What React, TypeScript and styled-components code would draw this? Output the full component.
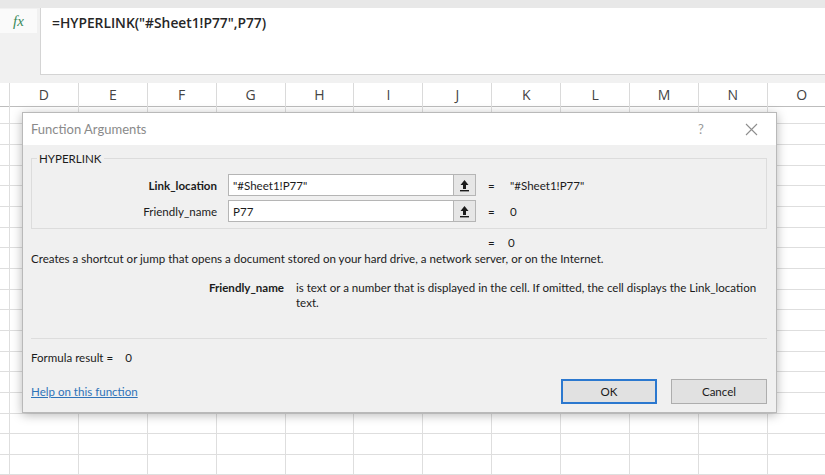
import React from 'react';
import styled, {createGlobalStyle} from 'styled-components';

const GlobalStyle = createGlobalStyle`
  html, body {
    margin: 0;
    padding: 0;
    background: #ffffff;
    overflow: hidden;
  }
  body {
    font-family: Lato, "Noto Sans", sans-serif;
  }
`;

const COLUMNS = ['', 'D', 'E', 'F', 'G', 'H', 'I', 'J', 'K', 'L', 'M', 'N', 'O'];
const ROW_COUNT = 18;

const Page = styled.div`
  position: relative;
  width: 825px;
  height: 475px;
  overflow: hidden;
  background: #ffffff;
`;

const Ribbon = styled.div`
  height: 8px;
  background: #e8e8e8;
`;

const FormulaBar = styled.div`
  display: flex;
  height: 67px;
  background: #f1f1f1;
`;

const FxBox = styled.div`
  width: 37px;
  height: 24px;
  margin-top: 1px;
  display: flex;
  align-items: center;
  justify-content: center;
  background: #fafafa;
  font-family: "Liberation Serif", serif;
  font-style: italic;
  font-size: 15px;
  color: #3a8a5a;
`;

const FormulaInput = styled.div`
  flex: 1;
  margin-left: 3px;
  background: #ffffff;
  border-left: 1px solid #d4d4d4;
  border-bottom: 1px solid #d4d4d4;
  padding: 5px 0 0 11px;
  font-family: "Open Sans", sans-serif;
  font-weight: 600;
  font-size: 13.8px;
  color: #262626;
`;

const Gap = styled.div`
  height: 8px;
  background: #f1f1f1;
`;

const Sheet = styled.div`
  display: grid;
  grid-template-columns: 10px repeat(12, 68.9px);
  grid-auto-rows: 20.67px;
`;

const HeaderCell = styled.div`
  height: 24px;
  display: flex;
  align-items: center;
  justify-content: center;
  background: #ffffff;
  border-right: 1px solid #dadada;
  border-bottom: 1px solid #bdbdbd;
  box-sizing: border-box;
  font-family: "Open Sans", sans-serif;
  font-size: 14px;
  color: #444444;
`;

const Cell = styled.div`
  border-right: 1px solid #dedede;
  border-bottom: 1px solid #dedede;
  box-sizing: border-box;
`;

const Dialog = styled.div`
  position: absolute;
  left: 22px;
  top: 112px;
  width: 755px;
  height: 301px;
  box-sizing: border-box;
  background: #f0f0f0;
  border: 1px solid #b9b9b9;
  box-shadow: 0 2px 10px rgba(0, 0, 0, 0.28);
  display: flex;
  flex-direction: column;
  font-size: 11.55px;
  color: #1b1b1b;
`;

const TitleBar = styled.div`
  height: 32px;
  background: #ffffff;
  display: flex;
  align-items: center;
  padding-left: 8px;
`;

const Title = styled.div`
  flex: 1;
  font-size: 13px;
  color: #8a8a8a;
`;

const TitleButton = styled.div`
  width: 50px;
  display: flex;
  justify-content: center;
  color: #9a9a9a;
  font-size: 13px;
`;

const Body = styled.div`
  flex: 1;
  display: flex;
  flex-direction: column;
  padding: 7px 9px 0 8px;
`;

const Group = styled.fieldset`
  margin: 0;
  padding: 9px 0 5px 0;
  border: 1px solid #dcdcdc;
  height: 77px;
  box-sizing: border-box;
`;

const Legend = styled.legend`
  padding: 0 2px;
  margin-left: 5px;
  font-size: 11.55px;
  color: #1b1b1b;
`;

const ArgRow = styled.div`
  display: grid;
  grid-template-columns: 196px 248px 34px 1fr;
  align-items: center;
  height: 22px;
  margin-bottom: 4px;
`;

const ArgLabel = styled.div<{ $bold?: boolean }>`
  text-align: right;
  padding-right: 11px;
  font-weight: ${p => (p.$bold ? 700 : 400)};
`;

const InputBox = styled.div`
  display: flex;
  height: 22px;
  box-sizing: border-box;
  border: 1px solid #b5b5b5;
  background: #ffffff;
`;

const InputText = styled.div`
  flex: 1;
  display: flex;
  align-items: center;
  padding-left: 4px;
`;

const PickButton = styled.div`
  width: 21px;
  display: flex;
  align-items: center;
  justify-content: center;
  background: #e6e6e6;
  border-left: 1px solid #b5b5b5;
`;

const Equals = styled.div`
  padding-left: 12px;
`;

const ResultLine = styled.div`
  display: grid;
  grid-template-columns: 457px 20px 1fr;
  height: 17px;
  margin-top: 5px;
  align-items: center;
`;

const Description = styled.div`
  margin-top: 1px;
  height: 17px;
`;

const ArgHelp = styled.div`
  display: grid;
  grid-template-columns: 265px 1fr;
  margin-top: 11px;
  line-height: 15px;
  height: 58px;
`;

const ArgHelpName = styled.div`
  text-align: right;
  font-weight: 700;
  padding-right: 12px;
`;

const ArgHelpText = styled.div`
  padding-right: 0;
`;

const Separator = styled.div`
  height: 1px;
  background: #dddddd;
`;

const FormulaResult = styled.div`
  margin-top: 12px;
  height: 17px;
  display: flex;
  gap: 12px;
`;

const Footer = styled.div`
  display: flex;
  align-items: center;
  margin-top: 11px;
`;

const HelpLink = styled.a`
  flex: 1;
  color: #2f73b8;
  text-decoration: underline;
  cursor: pointer;
`;

const DialogButton = styled.button<{ $primary?: boolean }>`
  width: 96px;
  height: 25px;
  margin-left: 14px;
  font-family: inherit;
  font-size: 11.55px;
  color: #1b1b1b;
  background: #e1e1e1;
  border: ${p => (p.$primary ? '2px solid #2b78cf' : '1px solid #adadad')};
`;

const UpArrow = () => (
  <svg width="11" height="13" viewBox="0 0 11 13">
    <path d="M5.5 1 L1.5 6 H4 V10 H7 V6 H9.5 Z" fill="#1b1b1b"/>
    <rect x="1" y="11" width="9" height="1.4" fill="#1b1b1b"/>
  </svg>
);

const CloseIcon = () => (
  <svg width="13" height="13" viewBox="0 0 13 13">
    <path d="M1 1 L12 12 M12 1 L1 12" stroke="#8e8e8e" strokeWidth="1.1"/>
  </svg>
);

const args = [
  {name: 'Link_location', value: '"#Sheet1!P77"', result: '"#Sheet1!P77"', bold: true},
  {name: 'Friendly_name', value: 'P77', result: '0', bold: false},
];

export default function App() {
  return (
    <Page>
      <GlobalStyle/>
      <Ribbon/>
      <FormulaBar>
        <FxBox>fx</FxBox>
        <FormulaInput>=HYPERLINK("#Sheet1!P77",P77)</FormulaInput>
      </FormulaBar>
      <Gap/>
      <Sheet>
        {COLUMNS.map((c, i) => (
          <HeaderCell key={'h' + i}>{c}</HeaderCell>
        ))}
        {Array.from({length: ROW_COUNT * COLUMNS.length}).map((_, i) => (
          <Cell key={i}/>
        ))}
      </Sheet>

      <Dialog>
        <TitleBar>
          <Title>Function Arguments</Title>
          <TitleButton>?</TitleButton>
          <TitleButton><CloseIcon/></TitleButton>
        </TitleBar>
        <Body>
          <Group>
            <Legend>HYPERLINK</Legend>
            {args.map(a => (
              <ArgRow key={a.name}>
                <ArgLabel $bold={a.bold}>{a.name}</ArgLabel>
                <InputBox>
                  <InputText>{a.value}</InputText>
                  <PickButton><UpArrow/></PickButton>
                </InputBox>
                <Equals>=</Equals>
                <div>{a.result}</div>
              </ArgRow>
            ))}
          </Group>
          <ResultLine>
            <div/>
            <div>=</div>
            <div>0</div>
          </ResultLine>
          <Description>
            Creates a shortcut or jump that opens a document stored on your hard drive, a network server, or on the Internet.
          </Description>
          <ArgHelp>
            <ArgHelpName>Friendly_name</ArgHelpName>
            <ArgHelpText>
              is text or a number that is displayed in the cell. If omitted, the cell displays the Link_location text.
            </ArgHelpText>
          </ArgHelp>
          <Separator/>
          <FormulaResult>
            <span>Formula result =</span>
            <span>0</span>
          </FormulaResult>
          <Footer>
            <HelpLink>Help on this function</HelpLink>
            <DialogButton $primary>OK</DialogButton>
            <DialogButton>Cancel</DialogButton>
          </Footer>
        </Body>
      </Dialog>
    </Page>
  );
}
